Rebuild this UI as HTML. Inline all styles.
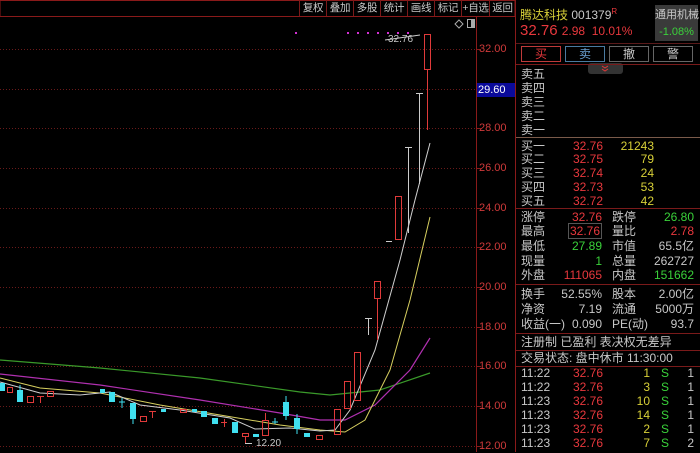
<!DOCTYPE html>
<html><head><meta charset="utf-8"><style>
*{margin:0;padding:0;box-sizing:border-box}
body{width:700px;height:452px;background:#000;overflow:hidden;position:relative;font-family:"Liberation Sans","Noto Sans CJK SC",sans-serif;font-size:12px;color:#c8c8c8}
.a{position:absolute;white-space:nowrap;line-height:13px;font-size:12px}
.r{color:#e8383d}.g{color:#3ad13a}.y{color:#d8d038}.w{color:#c8c8c8}
.tb{position:absolute;top:0;height:16px;border-left:1px solid #7a1a1a;font-size:10.5px;line-height:16px;color:#c8c8c8;text-align:center;white-space:nowrap;overflow:hidden;letter-spacing:-0.3px}
.btn{position:absolute;top:46px;height:16px;width:40px;border:1px solid #666;text-align:center;line-height:14px;font-size:12px}
.sep{position:absolute;left:516px;width:184px;height:1px;background:#7a1a1a}
.ax{position:absolute;left:479px;color:#d03a3a;font-size:11px;line-height:13px}
</style></head><body>
<svg width="700" height="452" style="position:absolute;left:0;top:0">
<rect x="0" y="0.5" width="515" height="16" fill="none" stroke="#8a1a1a"/>
<g stroke="#6a1a1a" stroke-dasharray="1 2">
<line x1="0" y1="49.5" x2="476" y2="49.5"/><line x1="0" y1="89.5" x2="476" y2="89.5"/><line x1="0" y1="128.5" x2="476" y2="128.5"/><line x1="0" y1="168.5" x2="476" y2="168.5"/><line x1="0" y1="208.5" x2="476" y2="208.5"/><line x1="0" y1="247.5" x2="476" y2="247.5"/><line x1="0" y1="287.5" x2="476" y2="287.5"/><line x1="0" y1="327.5" x2="476" y2="327.5"/><line x1="0" y1="366.5" x2="476" y2="366.5"/><line x1="0" y1="406.5" x2="476" y2="406.5"/><line x1="0" y1="446.5" x2="476" y2="446.5"/>
</g>
<line x1="476.5" y1="17" x2="476.5" y2="452" stroke="#8a1a1a"/>
<line x1="515.5" y1="0" x2="515.5" y2="452" stroke="#8a1a1a"/>
<g stroke="#8a1a1a"><line x1="477" y1="49.5" x2="481" y2="49.5"/><line x1="477" y1="128.5" x2="481" y2="128.5"/><line x1="477" y1="168.5" x2="481" y2="168.5"/><line x1="477" y1="208.5" x2="481" y2="208.5"/><line x1="477" y1="247.5" x2="481" y2="247.5"/><line x1="477" y1="287.5" x2="481" y2="287.5"/><line x1="477" y1="327.5" x2="481" y2="327.5"/><line x1="477" y1="366.5" x2="481" y2="366.5"/><line x1="477" y1="406.5" x2="481" y2="406.5"/><line x1="477" y1="446.5" x2="481" y2="446.5"/></g>
<rect x="477" y="83" width="38" height="14" fill="#0a0a9a"/>
<g fill="#d030d0"><rect x="295" y="32" width="2" height="2"/><rect x="347" y="32" width="2" height="2"/><rect x="357" y="32" width="2" height="2"/><rect x="367" y="32" width="2" height="2"/><rect x="377" y="32" width="2" height="2"/><rect x="387" y="32" width="2" height="2"/><rect x="397" y="32" width="2" height="2"/><rect x="407" y="32" width="2" height="2"/></g>
<line x1="385" y1="40" x2="420" y2="35" stroke="#ccc"/>
<polyline fill="none" stroke="#3a9a2a" stroke-width="1.2" points="0,360 100,368 200,378 300,392 330,395 380,390 430,373"/>
<polyline fill="none" stroke="#b030b0" stroke-width="1.2" points="0,374 100,385 200,400 280,413 320,420 345,420 375,405 410,370 430,338"/>
<polyline fill="none" stroke="#d8d060" stroke-width="1" points="0,378 40,388 100,393 160,405 220,415 280,425 320,430 345,432 365,420 390,370 410,300 430,217"/>
<polyline fill="none" stroke="#cfcfcf" stroke-width="1" points="0,382 40,393 80,395 110,392 140,405 180,410 230,418 255,429 290,428 320,431 335,430 350,410 375,350 400,260 415,200 430,143"/>
<g fill="#40e0f0">
<rect x="0" y="383" width="5" height="8"/><rect x="17" y="390" width="6" height="12"/><rect x="100" y="389" width="5" height="4"/><rect x="109" y="392" width="6" height="10"/><rect x="130" y="403" width="6" height="16"/><rect x="161" y="409" width="5" height="3"/><rect x="192" y="409" width="5" height="3"/><rect x="201" y="411" width="6" height="6"/><rect x="212" y="418" width="6" height="6"/><rect x="232" y="422" width="6" height="11"/><rect x="253" y="434" width="6" height="3"/><rect x="283" y="402" width="6" height="14"/><rect x="294" y="418" width="6" height="11"/><rect x="304" y="433" width="6" height="4"/>
</g>
<g stroke="#40e0f0"><line x1="20" y1="385" x2="20" y2="390"/><line x1="122" y1="398" x2="122" y2="408"/><line x1="119" y1="402" x2="125" y2="402"/><line x1="133" y1="419" x2="133" y2="424"/><line x1="286" y1="396" x2="286" y2="420"/><line x1="297" y1="414" x2="297" y2="434"/><line x1="275" y1="418" x2="275" y2="424"/><line x1="272" y1="422" x2="278" y2="422"/></g>
<g fill="none" stroke="#e03a3a">
<rect x="7.5" y="387.5" width="5" height="5"/><rect x="27.5" y="396.5" width="6" height="6"/><line x1="37" y1="396.5" x2="44" y2="396.5"/><line x1="40.5" y1="396" x2="40.5" y2="403"/><rect x="47.5" y="391.5" width="6" height="5"/><rect x="140.5" y="416.5" width="6" height="5"/><line x1="149" y1="411.5" x2="156" y2="411.5"/><line x1="152.5" y1="411" x2="152.5" y2="418"/><rect x="180.5" y="409.5" width="6" height="3"/><line x1="221" y1="422.5" x2="227" y2="422.5"/><line x1="224.5" y1="419" x2="224.5" y2="427"/><rect x="242.5" y="433.5" width="6" height="3"/><line x1="245.5" y1="437" x2="245.5" y2="443"/><rect x="262.5" y="420.5" width="6" height="15"/><line x1="265.5" y1="413" x2="265.5" y2="420"/><rect x="316.5" y="435.5" width="6" height="4"/><rect x="334.5" y="409.5" width="6" height="25"/><rect x="344.5" y="381.5" width="6" height="27"/><rect x="354.5" y="352.5" width="6" height="48"/><rect x="374.5" y="281.5" width="6" height="17"/><line x1="377.5" y1="299" x2="377.5" y2="340"/><rect x="395.5" y="196.5" width="6" height="43"/><rect x="424.5" y="34.5" width="6" height="35"/><line x1="427.5" y1="69" x2="427.5" y2="130"/>
</g>
<g stroke="#ccc"><line x1="368.5" y1="318" x2="368.5" y2="335"/><line x1="365" y1="318.5" x2="372" y2="318.5"/><line x1="386" y1="241.5" x2="392" y2="241.5"/><line x1="408.5" y1="147" x2="408.5" y2="233"/><line x1="405" y1="147.5" x2="412" y2="147.5"/><line x1="419.5" y1="93" x2="419.5" y2="184"/><line x1="416" y1="93.5" x2="423" y2="93.5"/><line x1="245" y1="443.5" x2="252" y2="443.5"/></g>
<path d="M459 20 l4 4 -4 4 -4 -4z" fill="none" stroke="#aaa"/>
<rect x="467.5" y="19.5" width="7" height="8" fill="none" stroke="#aaa"/><rect x="471" y="20" width="3" height="7" fill="#aaa"/>
<rect x="588" y="63" width="35" height="11" rx="3" fill="#333"/>
<path d="M602 66 l3 2 3-2 M602 69 l3 2 3-2" stroke="#e03a3a" fill="none"/>
<rect x="655" y="5" width="43" height="36" fill="#3a3a3a"/>
</svg>
<div class="tb" style="left:299px;width:27px">复权</div>
<div class="tb" style="left:326px;width:27px">叠加</div>
<div class="tb" style="left:353px;width:27px">多股</div>
<div class="tb" style="left:380px;width:27px">统计</div>
<div class="tb" style="left:407px;width:27px">画线</div>
<div class="tb" style="left:434px;width:27px">标记</div>
<div class="tb" style="left:461px;width:28px">+自选</div>
<div class="tb" style="left:489px;width:26px">返回</div>
<div class="a w" style="left:388px;top:33px;font-size:10px">32.76</div>
<div class="a w" style="left:256px;top:437px;font-size:10px">12.20</div>
<div class="ax" style="top:43px">32.00</div>
<div class="ax" style="left:478px;top:84px;color:#fff">29.60</div>
<div class="ax" style="top:122px">28.00</div>
<div class="ax" style="top:162px">26.00</div>
<div class="ax" style="top:202px">24.00</div>
<div class="ax" style="top:241px">22.00</div>
<div class="ax" style="top:281px">20.00</div>
<div class="ax" style="top:321px">18.00</div>
<div class="ax" style="top:360px">16.00</div>
<div class="ax" style="top:400px">14.00</div>
<div class="ax" style="top:440px">12.00</div>

<div class="a y" style="left:520px;top:5px;font-size:12px">腾达科技 <span class="w">001379</span><sup class="r" style="font-size:8px">R</sup></div>
<div class="a w" style="left:655px;top:9px;width:43px;text-align:center;font-size:11px">通用机械</div>
<div class="a g" style="left:655px;top:26px;width:43px;text-align:center;font-size:11px">-1.08%</div>
<div class="a r" style="left:520px;top:22px;font-size:15px;line-height:17px">32.76 <span style="font-size:12px">2.98&nbsp; 10.01%</span></div>
<div class="btn r" style="left:521px;border-color:#c03a3a">买</div>
<div class="btn" style="left:565px;border-color:#4a7aa0;color:#6aa0d0">卖</div>
<div class="btn w" style="left:609px">撤</div>
<div class="btn w" style="left:653px">警</div>
<div class="sep" style="top:43px;background:#5a1a1a"></div>
<div class="sep" style="top:64px"></div>
<div class="a w" style="left:521px;top:68px">卖五</div>
<div class="a w" style="left:521px;top:82px">卖四</div>
<div class="a w" style="left:521px;top:96px">卖三</div>
<div class="a w" style="left:521px;top:110px">卖二</div>
<div class="a w" style="left:521px;top:124px">卖一</div>
<div class="sep" style="top:137px;background:#7a5a4a"></div>
<div class="a w" style="left:521px;top:140px">买一</div><div class="a r" style="left:560px;top:140px;width:43px;text-align:right">32.76</div><div class="a y" style="left:610px;top:140px;width:44px;text-align:right">21243</div>
<div class="a w" style="left:521px;top:153px">买二</div><div class="a r" style="left:560px;top:153px;width:43px;text-align:right">32.75</div><div class="a y" style="left:610px;top:153px;width:44px;text-align:right">79</div>
<div class="a w" style="left:521px;top:167px">买三</div><div class="a r" style="left:560px;top:167px;width:43px;text-align:right">32.74</div><div class="a y" style="left:610px;top:167px;width:44px;text-align:right">24</div>
<div class="a w" style="left:521px;top:181px">买四</div><div class="a r" style="left:560px;top:181px;width:43px;text-align:right">32.73</div><div class="a y" style="left:610px;top:181px;width:44px;text-align:right">53</div>
<div class="a w" style="left:521px;top:195px">买五</div><div class="a r" style="left:560px;top:195px;width:43px;text-align:right">32.72</div><div class="a y" style="left:610px;top:195px;width:44px;text-align:right">42</div>
<div class="sep" style="top:208px"></div>
<div class="a w" style="left:521px;top:211px">涨停</div><div class="a r" style="left:552px;top:211px;width:50px;text-align:right">32.76</div><div class="a w" style="left:612px;top:211px">跌停</div><div class="a g" style="left:644px;top:211px;width:50px;text-align:right">26.80</div>
<div class="a w" style="left:521px;top:225px">最高</div><div class="a r" style="left:552px;top:225px;width:50px;text-align:right"><span style="border:1px solid #555;padding:0 1px">32.76</span></div><div class="a w" style="left:612px;top:225px">量比</div><div class="a r" style="left:644px;top:225px;width:50px;text-align:right">2.78</div>
<div class="a w" style="left:521px;top:240px">最低</div><div class="a g" style="left:552px;top:240px;width:50px;text-align:right">27.89</div><div class="a w" style="left:612px;top:240px">市值</div><div class="a w" style="left:644px;top:240px;width:50px;text-align:right">65.5亿</div>
<div class="a w" style="left:521px;top:255px">现量</div><div class="a g" style="left:552px;top:255px;width:50px;text-align:right">1</div><div class="a w" style="left:612px;top:255px">总量</div><div class="a w" style="left:644px;top:255px;width:50px;text-align:right">262727</div>
<div class="a w" style="left:521px;top:269px">外盘</div><div class="a r" style="left:552px;top:269px;width:50px;text-align:right">111065</div><div class="a w" style="left:612px;top:269px">内盘</div><div class="a g" style="left:644px;top:269px;width:50px;text-align:right">151662</div>
<div class="sep" style="top:284px"></div>
<div class="a w" style="left:521px;top:288px">换手</div><div class="a w" style="left:552px;top:288px;width:50px;text-align:right">52.55%</div><div class="a w" style="left:612px;top:288px">股本</div><div class="a w" style="left:644px;top:288px;width:50px;text-align:right">2.00亿</div>
<div class="a w" style="left:521px;top:303px">净资</div><div class="a w" style="left:552px;top:303px;width:50px;text-align:right">7.19</div><div class="a w" style="left:612px;top:303px">流通</div><div class="a w" style="left:644px;top:303px;width:50px;text-align:right">5000万</div>
<div class="a w" style="left:521px;top:318px">收益(一)</div><div class="a w" style="left:552px;top:318px;width:50px;text-align:right">0.090</div><div class="a w" style="left:612px;top:318px">PE(动)</div><div class="a w" style="left:644px;top:318px;width:50px;text-align:right">93.7</div>
<div class="sep" style="top:333px"></div>
<div class="a w" style="left:521px;top:336px">注册制 已盈利 表决权无差异</div>
<div class="sep" style="top:350px"></div>
<div class="a w" style="left:521px;top:352px">交易状态: 盘中休市 11:30:00</div>
<div class="sep" style="top:366px"></div>
<div class="a w" style="left:521px;top:367px">11:22</div><div class="a r" style="left:560px;top:367px;width:43px;text-align:right">32.76</div><div class="a y" style="left:630px;top:367px;width:20px;text-align:right">1</div><div class="a g" style="left:661px;top:367px">S</div><div class="a w" style="left:684px;top:367px;width:10px;text-align:right">1</div>
<div class="a w" style="left:521px;top:381px">11:22</div><div class="a r" style="left:560px;top:381px;width:43px;text-align:right">32.76</div><div class="a y" style="left:630px;top:381px;width:20px;text-align:right">3</div><div class="a g" style="left:661px;top:381px">S</div><div class="a w" style="left:684px;top:381px;width:10px;text-align:right">1</div>
<div class="a w" style="left:521px;top:395px">11:23</div><div class="a r" style="left:560px;top:395px;width:43px;text-align:right">32.76</div><div class="a y" style="left:630px;top:395px;width:20px;text-align:right">10</div><div class="a g" style="left:661px;top:395px">S</div><div class="a w" style="left:684px;top:395px;width:10px;text-align:right">1</div>
<div class="a w" style="left:521px;top:409px">11:23</div><div class="a r" style="left:560px;top:409px;width:43px;text-align:right">32.76</div><div class="a y" style="left:630px;top:409px;width:20px;text-align:right">14</div><div class="a g" style="left:661px;top:409px">S</div><div class="a w" style="left:684px;top:409px;width:10px;text-align:right">1</div>
<div class="a w" style="left:521px;top:423px">11:23</div><div class="a r" style="left:560px;top:423px;width:43px;text-align:right">32.76</div><div class="a y" style="left:630px;top:423px;width:20px;text-align:right">2</div><div class="a g" style="left:661px;top:423px">S</div><div class="a w" style="left:684px;top:423px;width:10px;text-align:right">1</div>
<div class="a w" style="left:521px;top:437px">11:23</div><div class="a r" style="left:560px;top:437px;width:43px;text-align:right">32.76</div><div class="a y" style="left:630px;top:437px;width:20px;text-align:right">7</div><div class="a g" style="left:661px;top:437px">S</div><div class="a w" style="left:684px;top:437px;width:10px;text-align:right">2</div>
</body></html>
